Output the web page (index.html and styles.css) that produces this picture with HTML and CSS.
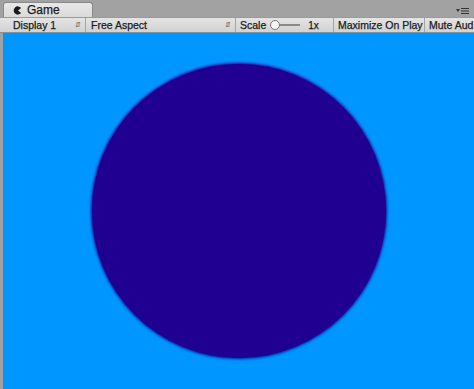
FILE: index.html
```html
<!DOCTYPE html>
<html lang="en">
<head>
    <meta charset="UTF-8">
    <title>Game</title>
    <link rel="stylesheet" href="styles.css">
</head>
<body>

<div class="window">
    <div class="tabbar">
        <div class="tab">
            <svg class="tab-icon" width="9" height="9" viewBox="0 0 10 10">
                <path d="M9 2.2 A4.6 4.6 0 1 0 9 7.8 L5.6 5 Z" fill="#1a1a1a"/>
            </svg>
            <span>Game</span>
        </div>
        <div class="tab-menu">
            <svg width="14" height="8" viewBox="0 0 14 8">
                <path d="M0 2 L4 2 L2 5 Z" fill="#333"/>
                <rect x="5" y="1" width="8" height="1" fill="#333"/>
                <rect x="5" y="3.5" width="8" height="1" fill="#333"/>
                <rect x="5" y="6" width="8" height="1" fill="#333"/>
            </svg>
        </div>
    </div>

    <div class="toolbar">
        <div class="drop display">Display 1 <span class="arrows">&#8693;</span></div>
        <div class="drop aspect">Free Aspect <span class="arrows">&#8693;</span></div>
        <div class="item scale">
            Scale
            <span class="slider"><span class="knob"></span></span>
            <span class="scale-val">1x</span>
        </div>
        <div class="item maximize">Maximize On Play</div>
        <div class="item last">Mute Aud</div>
    </div>

    <div class="view">
        <div class="ball"></div>
    </div>
</div>

</body>
</html>
```

FILE: styles.css
```css
body {
    margin: 0;
    width: 474px;
    height: 389px;
    overflow: hidden;
    background-color: #a2a2a2;
    font-family: "Liberation Sans", Arial, sans-serif;
    font-size: 10.5px;
    color: #1a1a1a;
    -webkit-text-stroke: 0.25px #1a1a1a;
}
.window {
    display: flex;
    flex-direction: column;
    height: 389px;
}
.tabbar {
    height: 17px;
    display: flex;
    align-items: flex-end;
    justify-content: space-between;
    padding-left: 3px;
}
.tab {
    width: 90px;
    height: 15px;
    background: linear-gradient(#e8e8e8, #dadada);
    border: 1px solid #8a8a8a;
    border-bottom: none;
    border-radius: 3px 3px 0 0;
    display: flex;
    align-items: center;
    font-size: 12px;
    box-sizing: border-box;
    padding-left: 9px;
    gap: 5px;
}
.tab-menu {
    align-self: center;
    margin-top: 5px;
    padding-right: 4px;
}
.toolbar {
    display: flex;
    align-items: stretch;
    background: linear-gradient(#e4e4e4, #d2d2d2);
    border-top: 1px solid #9a9a9a;
    border-bottom: 1px solid #8e8e8e;
    box-sizing: border-box;
    height: 16px;
    white-space: nowrap;
    overflow: hidden;
}
.drop, .item {
    flex-shrink: 0;
    display: flex;
    align-items: center;
    border-right: 1px solid #a4a4a4;
    padding: 0 4px;
    box-sizing: border-box;
}
.display {
    width: 83px;
    margin-left: 3px;
    padding-left: 10px;
    justify-content: space-between;
}
.aspect {
    width: 150px;
    padding-left: 5px;
    justify-content: space-between;
}
.arrows {
    font-size: 7px;
    color: #555;
    -webkit-text-stroke: 0;
}
.scale {
    width: 98px;
    gap: 3px;
}
.slider {
    width: 28px;
    height: 2px;
    background: #8a8a8a;
    position: relative;
    margin: 0 3px;
}
.knob {
    position: absolute;
    left: -2px;
    top: -4px;
    width: 8px;
    height: 8px;
    border-radius: 50%;
    background: #f4f4f4;
    border: 1px solid #777;
}
.scale-val {
    font-size: 10px;
    margin-left: 2px;
}
.maximize {
    width: 91px;
    padding-left: 4px;
}
.last {
    border-right: none;
}
.view {
    flex: 1;
    background-color: #0096ff;
    margin-left: 3px;
    position: relative;
    overflow: hidden;
}
.ball {
    position: absolute;
    left: 89px;
    top: 31px;
    width: 294px;
    height: 294px;
    border-radius: 50%;
    background-color: #1f0090;
    box-shadow: 0 0 3px 1px #1f0090;
}
```
